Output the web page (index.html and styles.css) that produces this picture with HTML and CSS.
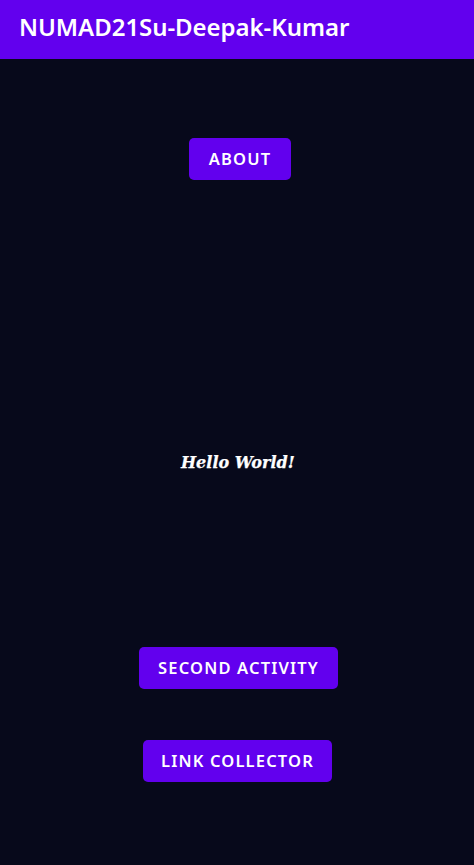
FILE: index.html
```html
<!DOCTYPE html>
<html lang="en">
<head>
<meta charset="utf-8">
<title>NUMAD21Su-Deepak-Kumar</title>
<link rel="stylesheet" href="styles.css">
</head>
<body>
<header class="app-bar"><h1 class="app-title">NUMAD21Su-Deepak-Kumar</h1></header>
<main class="content">
  <button class="btn btn-about">ABOUT</button>
  <p class="hello">Hello World!</p>
  <button class="btn btn-second">SECOND ACTIVITY</button>
  <button class="btn btn-link">LINK COLLECTOR</button>
</main>
</body>
</html>
```
FILE: styles.css
```css
* { box-sizing: border-box; }
html, body { margin: 0; height: 100%; }
body {
  background: #07091b;
  font-family: "Noto Sans", "Open Sans", sans-serif;
  color: #fff;
  overflow: hidden;
}
.app-bar {
  height: 59px;
  background: #6200ee;
  display: flex;
  align-items: center;
  padding: 0 0 5px 19px;
}
.app-title {
  margin: 0;
  font-size: 24px;
  font-weight: 600;
  letter-spacing: -0.05px;
  line-height: 32px;
  color: #fff;
}
.content {
  display: flex;
  flex-direction: column;
  align-items: flex-start;
  padding-top: 79px;
}
.btn {
  height: 42px;
  border: 0;
  border-radius: 5px;
  background: #6200ee;
  color: #fff;
  font-family: inherit;
  font-size: 16.5px;
  font-weight: 600;
  letter-spacing: 1.15px;
  padding: 0 0 2px;
  display: flex;
  align-items: center;
  justify-content: center;
}
.btn-about { width: 102px; margin-left: 189px; }
.btn-second { width: 199px; margin-left: 139px; margin-top: 170px; }
.btn-link { width: 189px; margin-left: 143px; margin-top: 51px; }
.hello {
  margin: 268px 0 0 181px;
  font-family: "DejaVu Serif", serif;
  font-size: 16px;
  font-weight: 700;
  font-style: italic;
  line-height: 29px;
  color: #fff;
  -webkit-text-stroke: 0.25px #fff;
}
```
